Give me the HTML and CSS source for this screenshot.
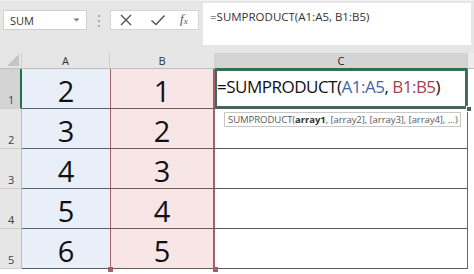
FILE: index.html
```html
<!DOCTYPE html>
<html lang="en">
<head>
    <meta charset="utf-8" />
    <title>SUMPRODUCT</title>
    <link rel="stylesheet" href="styles.css">
</head>
<body>
    <div id="app">
        <div id="toolbar">
            <div class="namebox">
                <span>SUM</span>
                <svg width="7" height="4" viewBox="0 0 7 4"><path d="M0.5 0.5 L3.5 3.5 L6.5 0.5 Z" fill="#777"/></svg>
            </div>
            <div class="grip">
                <span></span><span></span><span></span>
            </div>
            <div class="fnbtns">
                <svg class="btn-x" width="14" height="14" viewBox="0 0 14 14"><path d="M2 2 L12 12 M12 2 L2 12" stroke="#555" stroke-width="1.4"/></svg>
                <svg class="btn-ok" width="16" height="14" viewBox="0 0 16 14"><path d="M1.5 7.5 L6 11.5 L14.5 2.5" stroke="#555" stroke-width="1.5" fill="none"/></svg>
                <span class="fx">f<sub>x</sub></span>
            </div>
            <div class="formula">=SUMPRODUCT(A1:A5, B1:B5)</div>
        </div>

        <div id="sheet">
            <div class="corner"><span></span></div>
            <div class="colhead">A</div>
            <div class="colhead">B</div>
            <div class="colhead sel">C</div>
            <div class="colhead rest"></div>

            <div class="rowhead sel">1</div>
            <div class="cell a">2</div>
            <div class="cell b">1</div>
            <div class="cell c active"><span>=SUMPRODUCT(<span class="ref-a">A1:A5</span>, <span class="ref-b">B1:B5</span>)</span></div>
            <div class="cell rest"></div>

            <div class="rowhead">2</div>
            <div class="cell a">3</div>
            <div class="cell b">2</div>
            <div class="cell c"></div>
            <div class="cell rest"></div>

            <div class="rowhead">3</div>
            <div class="cell a">4</div>
            <div class="cell b">3</div>
            <div class="cell c"></div>
            <div class="cell rest"></div>

            <div class="rowhead">4</div>
            <div class="cell a">5</div>
            <div class="cell b">4</div>
            <div class="cell c"></div>
            <div class="cell rest"></div>

            <div class="rowhead">5</div>
            <div class="cell a">6</div>
            <div class="cell b">5</div>
            <div class="cell c"></div>
            <div class="cell rest"></div>

            <div class="tip">SUMPRODUCT(<b>array1</b>, [array2], [array3], [array4], ...)</div>
            <span class="handle h-c1"></span>
            <span class="handle h-b1"></span>
            <span class="handle h-b2"></span>
        </div>
    </div>
</body>
</html>
```

FILE: styles.css
```css
body{
    margin:0;
    background-color:#ffffff;
    font-family:"Open Sans","Noto Sans",sans-serif;
    color:#222;
}
#app{
    width:474px;
    height:274px;
    overflow:hidden;
}
#toolbar{
    height:53px;
    background-color:#e6e6e6;
    display:flex;
    align-items:flex-start;
    border-top:1px solid #f0f0f0;
    box-sizing:border-box;
}
.namebox{
    margin:9px 0 0 3px;
    width:84px;
    height:20px;
    box-sizing:border-box;
    background-color:#fff;
    border:1px solid #d0d0d0;
    display:flex;
    align-items:center;
    justify-content:space-between;
    padding:0 6px 0 6px;
    font-size:11px;
    color:#333;
}
.grip{
    margin:14px 0 0 11px;
    width:2px;
    display:flex;
    flex-direction:column;
    gap:3px;
}
.grip span{
    width:2px;
    height:2px;
    background-color:#aaa;
}
.fnbtns{
    margin:9px 0 0 10px;
    width:89px;
    height:20px;
    box-sizing:border-box;
    background-color:#fff;
    border:1px solid #d6d6d6;
    display:flex;
    align-items:center;
    padding-left:8px;
}
.btn-x{
    margin-right:17px;
}
.btn-ok{
    margin-right:14px;
}
.fx{
    font-family:"Liberation Serif",serif;
    font-style:italic;
    font-size:13px;
    color:#555;
    line-height:14px;
}
.fx sub{
    font-size:9px;
    vertical-align:-1px;
}
.formula{
    margin:2px 0 0 4px;
    width:268px;
    height:42px;
    box-sizing:border-box;
    background-color:#fff;
    padding:6px 0 0 7px;
    font-size:11.5px;
    color:#333;
}
#sheet{
    position:relative;
    display:grid;
    grid-template-columns:22px 88px 105px 253px 6px;
    grid-template-rows:16px repeat(5,40px);
    background-color:#fff;
}
.corner{
    background-color:#e6e6e6;
    border-bottom:1px solid #bdbdbd;
    border-right:1px solid #cfcfcf;
    position:relative;
}
.corner span{
    position:absolute;
    right:2px;
    bottom:2px;
    width:0;
    height:0;
    border-left:12px solid transparent;
    border-bottom:12px solid #c4c4c4;
}
.colhead{
    background-color:#e6e6e6;
    border-bottom:1px solid #bdbdbd;
    border-right:1px solid #d0d0d0;
    font-size:11px;
    color:#333;
    text-align:center;
    line-height:15px;
}
.colhead.sel{
    background-color:#d4d4d4;
    border-bottom:1px solid #217346;
    color:#222;
}
.colhead.rest{
    background-color:#ececec;
    border-right:none;
}
.rowhead{
    background-color:#e6e6e6;
    border-bottom:1px solid #cfcfcf;
    border-right:1px solid #bdbdbd;
    font-size:11px;
    color:#444;
    display:flex;
    align-items:flex-end;
    padding:0 0 1px 8px;
}
.rowhead.sel{
    background-color:#d4d4d4;
    border-right:2px solid #217346;
}
.cell{
    font-size:29px;
    line-height:29px;
    display:flex;
    align-items:flex-end;
    justify-content:center;
    padding-bottom:3px;
    color:#111;
}
.cell.a{
    background-color:#e8eff9;
    border-bottom:1px solid #566274;
}
.cell.b{
    background-color:#f8e6e7;
    border-left:1px solid #a26068;
    border-right:2px solid #a26068;
    border-bottom:1px solid #6b5b5e;
}
.cell.c{
    border-bottom:1px solid #5a5a5a;
    border-right:1px solid #666;
    justify-content:flex-start;
    white-space:nowrap;
    font-size:17px;
    line-height:24px;
    padding:0 0 9px 2px;
}
.cell.c.active{
    box-shadow:inset 0 0 0 2px #3d6b55;
    letter-spacing:-0.5px;
}
.cell.rest{
    background-color:#fff;
}
.ref-a{
    color:#3c67a8;
}
.ref-b{
    color:#a8434c;
}
.tip{
    position:absolute;
    left:224px;
    top:59px;
    width:237px;
    height:15px;
    box-sizing:border-box;
    border:1px solid #c8c8c8;
    background-color:#fff;
    font-size:9.6px;
    line-height:13px;
    color:#5a5a5a;
    padding-left:3px;
    white-space:nowrap;
    letter-spacing:-0.1px;
}
.tip b{
    color:#333;
}
.handle{
    position:absolute;
    width:5px;
    height:5px;
}
.h-c1{
    left:466px;
    top:53px;
    background-color:#3d6b55;
    border:1px solid #fff;
    width:4px;
    height:4px;
}
.h-b1{
    left:108px;
    top:214px;
    background-color:#a26068;
}
.h-b2{
    left:213px;
    top:214px;
    background-color:#a26068;
}
```
